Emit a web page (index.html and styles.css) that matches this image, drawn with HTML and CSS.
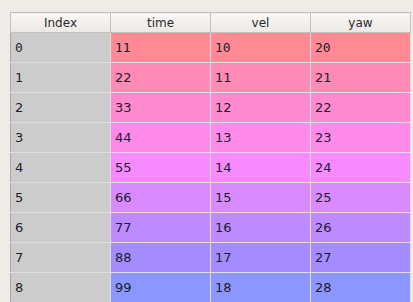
FILE: index.html
```html
<!DOCTYPE html>
<html>
<head>
<meta charset="utf-8">
<link rel="stylesheet" href="styles.css">
</head>
<body>
<div class="panel">
<table class="grid">
<thead>
<tr><th>Index</th><th>time</th><th>vel</th><th>yaw</th></tr>
</thead>
<tbody>
<tr class="r0 mono"><td class="idx">0</td><td>11</td><td>10</td><td>20</td></tr>
<tr class="r1"><td class="idx">1</td><td>22</td><td>11</td><td>21</td></tr>
<tr class="r2"><td class="idx">2</td><td>33</td><td>12</td><td>22</td></tr>
<tr class="r3"><td class="idx">3</td><td>44</td><td>13</td><td>23</td></tr>
<tr class="r4"><td class="idx">4</td><td>55</td><td>14</td><td>24</td></tr>
<tr class="r5"><td class="idx">5</td><td>66</td><td>15</td><td>25</td></tr>
<tr class="r6"><td class="idx">6</td><td>77</td><td>16</td><td>26</td></tr>
<tr class="r7"><td class="idx">7</td><td>88</td><td>17</td><td>27</td></tr>
<tr class="r8"><td class="idx">8</td><td>99</td><td>18</td><td>28</td></tr>
</tbody>
</table>
</div>
</body>
</html>
```
FILE: styles.css
```css
html, body {
  margin: 0;
  padding: 0;
  background: #efebe7;
  width: 413px;
  height: 302px;
  overflow: hidden;
}
.panel {
  padding: 12px 0 0 10px;
}
.grid {
  border-collapse: collapse;
  table-layout: fixed;
  font-family: "DejaVu Sans", sans-serif;
  font-size: 13px;
  color: #1c1c2a;
}
.grid th {
  box-sizing: border-box;
  width: 100px;
  height: 20px;
  padding: 0;
  font-weight: normal;
  font-size: 12px;
  color: #2a2a2a;
  text-align: center;
  background: linear-gradient(#f9f7f5, #ebe8e4);
  border: 1px solid #c4c0bb;
}
.grid td {
  box-sizing: border-box;
  height: 30px;
  padding: 0 0 0 4px;
  border: 1px solid #e4dde8;
  text-align: left;
  vertical-align: middle;
}
.grid td.idx {
  background: #cccccc;
  border-color: #dcdcdc;
  border-left-color: #a9a7a4;
}
.mono td {
  font-family: "DejaVu Sans Mono", monospace;
}
.r0 td { background: #ff8a94; }
.r1 td { background: #ff8ab4; }
.r2 td { background: #ff8ad0; }
.r3 td { background: #ff8aea; }
.r4 td { background: #f78aff; }
.r5 td { background: #da8aff; }
.r6 td { background: #bd8aff; }
.r7 td { background: #a48cff; }
.r8 td { background: #8c96ff; }
```
